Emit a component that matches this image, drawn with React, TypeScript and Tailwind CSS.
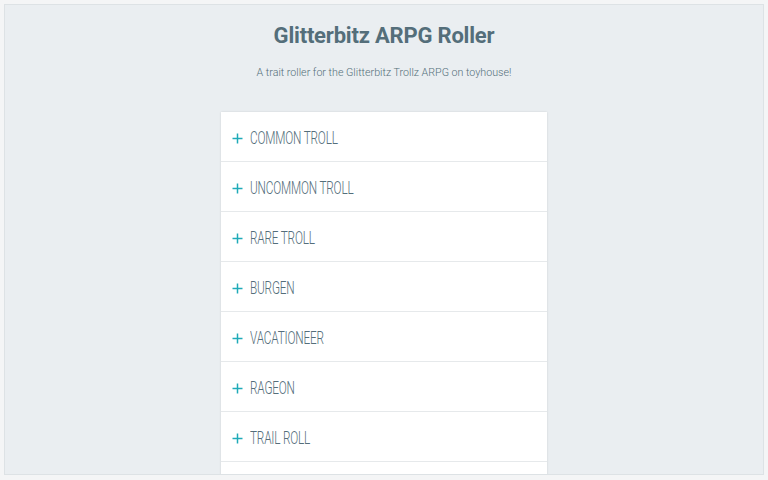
import React from "react";

const traits = [
  "COMMON TROLL",
  "UNCOMMON TROLL",
  "RARE TROLL",
  "BURGEN",
  "VACATIONEER",
  "RAGEON",
  "TRAIL ROLL",
  "",
];

function PlusIcon() {
  return (
    <svg width="11" height="11" viewBox="0 0 11 11" className="shrink-0">
      <line x1="5.5" y1="0.5" x2="5.5" y2="10.5" stroke="#1fabb8" strokeWidth="1.5" />
      <line x1="0.5" y1="5.5" x2="10.5" y2="5.5" stroke="#1fabb8" strokeWidth="1.5" />
    </svg>
  );
}

export default function App() {
  return (
    <div className="h-[480px] w-[768px] bg-[#f4f5f6] p-[4px] font-[Roboto,sans-serif]">
      <div className="h-[471px] overflow-hidden border border-[#dde2e5] bg-[#eaeef1]">
        {/* Header */}
        <h1 className="pt-[17px] text-center text-[22px] font-bold leading-[28px] tracking-[-0.2px] text-[#546e7a]">
          Glitterbitz ARPG Roller
        </h1>
        <p className="mt-[16px] text-center text-[10.7px] font-light leading-[14px] text-[#546e7a]">
          A trait roller for the Glitterbitz Trollz ARPG on toyhouse!
        </p>

        {/* Accordion */}
        <div className="mx-auto mt-[32px] w-[326px] bg-white shadow-[0_0_2px_rgba(0,0,0,0.12)]">
          {traits.map((t, i) => (
            <div
              key={i}
              className="flex h-[50px] items-center gap-[7px] border-b border-[#e6e9eb] pl-[11px] pt-[4px] last:border-b-0"
            >
              <PlusIcon />
              {t && (
                <span className="inline-block origin-left scale-x-[0.62] whitespace-nowrap text-[19px] font-light tracking-[-0.3px] text-[#546e7a]">
                  {t}
                </span>
              )}
            </div>
          ))}
        </div>
      </div>
    </div>
  );
}
